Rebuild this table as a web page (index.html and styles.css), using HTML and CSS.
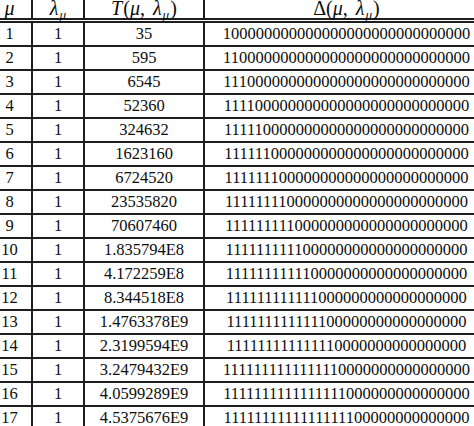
FILE: index.html
```html
<!DOCTYPE html>
<html>
<head>
<meta charset="utf-8">
<link rel="stylesheet" href="styles.css">
</head>
<body>
<table class="tbl">
<colgroup>
<col class="c-mu"><col class="c-lam"><col class="c-t"><col class="c-d">
</colgroup>
<thead>
<tr>
<th><i>μ</i></th>
<th><i class="lam">λ</i><sub><i>μ</i></sub></th>
<th><i class="tt">T</i>(<i>μ</i>,<span class="sp"></span><i class="lam">λ</i><sub><i>μ</i></sub>)</th>
<th>Δ(<i>μ</i>,<span class="sp"></span><i class="lam">λ</i><sub><i>μ</i></sub>)</th>
</tr>
</thead>
<tbody>
<tr><td>1</td><td>1</td><td>35</td><td>100000000000000000000000000000</td></tr>
<tr><td>2</td><td>1</td><td>595</td><td>110000000000000000000000000000</td></tr>
<tr><td>3</td><td>1</td><td>6545</td><td>111000000000000000000000000000</td></tr>
<tr><td>4</td><td>1</td><td>52360</td><td>111100000000000000000000000000</td></tr>
<tr><td>5</td><td>1</td><td>324632</td><td>111110000000000000000000000000</td></tr>
<tr><td>6</td><td>1</td><td>1623160</td><td>111111000000000000000000000000</td></tr>
<tr><td>7</td><td>1</td><td>6724520</td><td>111111100000000000000000000000</td></tr>
<tr><td>8</td><td>1</td><td>23535820</td><td>111111110000000000000000000000</td></tr>
<tr><td>9</td><td>1</td><td>70607460</td><td>111111111000000000000000000000</td></tr>
<tr><td>10</td><td>1</td><td>1.835794E8</td><td>111111111100000000000000000000</td></tr>
<tr><td>11</td><td>1</td><td>4.172259E8</td><td>111111111110000000000000000000</td></tr>
<tr><td>12</td><td>1</td><td>8.344518E8</td><td>111111111111000000000000000000</td></tr>
<tr><td>13</td><td>1</td><td>1.4763378E9</td><td>111111111111100000000000000000</td></tr>
<tr><td>14</td><td>1</td><td>2.3199594E9</td><td>111111111111110000000000000000</td></tr>
<tr><td>15</td><td>1</td><td>3.2479432E9</td><td>1111111111111110000000000000000</td></tr>
<tr><td>16</td><td>1</td><td>4.0599289E9</td><td>1111111111111111000000000000000</td></tr>
<tr><td>17</td><td>1</td><td>4.5375676E9</td><td>1111111111111111100000000000000</td></tr>
</tbody>
</table>
</body>
</html>
```
FILE: styles.css
```css
html, body {
  margin: 0;
  padding: 0;
  background: #ffffff;
  overflow: hidden;
}
body {
  width: 474px;
  height: 426px;
  font-family: "Liberation Serif", "Times New Roman", serif;
  color: #0d0d0d;
}
.tbl {
  border-collapse: collapse;
  table-layout: fixed;
  width: 502px;
  margin: -6px 0 0 -14px;
  font-size: 16.5px;
}
.c-mu { width: 45px; }
.c-lam { width: 52px; }
.c-t { width: 120px; }
.c-d { width: 285px; }
.tbl th, .tbl td {
  border: 2px solid #1e1e1e;
  text-align: center;
  padding: 0;
  white-space: nowrap;
  overflow: visible;
}
.tbl th {
  font-weight: normal;
  font-size: 20px;
  line-height: 20px;
  padding-top: 2px;
  border-bottom: 5px double #1e1e1e;
}
.tbl td {
  line-height: 22px;
}
.tbl sub {
  font-size: 0.66em;
  line-height: 0;
  vertical-align: -0.3em;
  margin-left: 1px;
  margin-right: 1px;
}
.lam {
  margin-left: 1px;
}
.tt {
  margin-right: 1px;
}
.sp {
  display: inline-block;
  width: 7px;
}
```
